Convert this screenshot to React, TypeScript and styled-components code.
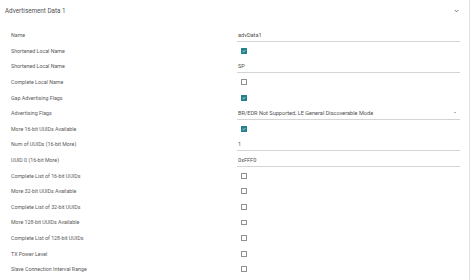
import styled, { createGlobalStyle } from "styled-components";

const GlobalStyle = createGlobalStyle`
  html, body {
    margin: 0;
    padding: 0;
    background: #fff;
  }
  body {
    font-family: Roboto, "Liberation Sans", sans-serif;
    color: #333;
  }
`;

const Panel = styled.div`
  width: 469px;
  height: 280px;
  border-right: 1px solid #e2e2e2;
  overflow: hidden;
`;

const Header = styled.div`
  display: flex;
  align-items: center;
  justify-content: space-between;
  height: 22px;
  padding: 0 10px 0 5px;
  font-size: 6.3px;
  color: #505050;
`;

const Body = styled.div`
  display: grid;
  grid-template-columns: 226px 1fr;
  grid-auto-rows: 15.6px;
  align-items: center;
  padding: 5.5px 9px 0 11px;
`;

const FormRow = styled.div`
  display: contents;
`;

const Label = styled.div`
  font-size: 5.3px;
  color: #5a5a5a;
  white-space: nowrap;
`;

const Field = styled.div`
  display: flex;
  align-items: center;
  justify-content: space-between;
  box-sizing: border-box;
  height: 12px;
  margin-top: 1px;
  padding: 0 4px 1px 1px;
  border-bottom: 1.5px solid #d4d4d4;
  font-size: 5.6px;
  color: #505050;
`;

const Caret = styled.span`
  width: 0;
  height: 0;
  border-left: 1.5px solid transparent;
  border-right: 1.5px solid transparent;
  border-top: 1.5px solid #666;
`;

const Box = styled.span<{ $checked?: boolean }>`
  display: flex;
  align-items: center;
  justify-content: center;
  box-sizing: border-box;
  width: 5.8px;
  height: 5.8px;
  margin-left: 4px;
  border-radius: 0.5px;
  border: 0.8px solid ${(p) => (p.$checked ? "#23808c" : "#8f8f8f")};
  background: ${(p) => (p.$checked ? "#23808c" : "#fff")};
`;

type Row =
  | { label: string; kind: "text"; value: string }
  | { label: string; kind: "select"; value: string }
  | { label: string; kind: "check"; checked: boolean };

const rows: Row[] = [
  { label: "Name", kind: "text", value: "advData1" },
  { label: "Shortened Local Name", kind: "check", checked: true },
  { label: "Shortened Local Name", kind: "text", value: "SP" },
  { label: "Complete Local Name", kind: "check", checked: false },
  { label: "Gap Advertising Flags", kind: "check", checked: true },
  {
    label: "Advertising Flags",
    kind: "select",
    value: "BR/EDR Not Supported, LE General Discoverable Mode",
  },
  { label: "More 16-bit UUIDs Available", kind: "check", checked: true },
  { label: "Num of UUIDs (16-bit More)", kind: "text", value: "1" },
  { label: "UUID 0 (16-bit More)", kind: "text", value: "0xFFF0" },
  { label: "Complete List of 16-bit UUIDs", kind: "check", checked: false },
  { label: "More 32-bit UUIDs Available", kind: "check", checked: false },
  { label: "Complete List of 32-bit UUIDs", kind: "check", checked: false },
  { label: "More 128-bit UUIDs Available", kind: "check", checked: false },
  { label: "Complete List of 128-bit UUIDs", kind: "check", checked: false },
  { label: "TX Power Level", kind: "check", checked: false },
  { label: "Slave Connection Interval Range", kind: "check", checked: false },
];

function Check({ checked }: { checked: boolean }) {
  return (
    <Box $checked={checked}>
      {checked && (
        <svg width="4" height="4" viewBox="0 0 10 10">
          <path d="M1.5 5.2 L4 7.6 L8.6 2.6" fill="none" stroke="#fff" strokeWidth="1.8" />
        </svg>
      )}
    </Box>
  );
}

export default function App(): JSX.Element {
  return (
    <>
      <GlobalStyle />
      <Panel>
        <Header>
          <span>Advertisement Data 1</span>
          <svg width="5" height="4" viewBox="0 0 10 8">
            <path d="M1.5 2 L5 5.5 L8.5 2" fill="none" stroke="#555" strokeWidth="1.6" />
          </svg>
        </Header>
        <Body>
          {rows.map((row, i) => (
            <FormRow key={i}>
              <Label>{row.label}</Label>
              {row.kind === "check" ? (
                <Check checked={row.checked} />
              ) : (
                <Field>
                  <span>{row.value}</span>
                  {row.kind === "select" && <Caret />}
                </Field>
              )}
            </FormRow>
          ))}
        </Body>
      </Panel>
    </>
  );
}
